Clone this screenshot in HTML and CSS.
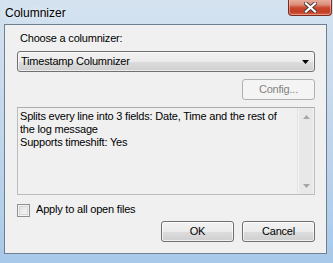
FILE: index.html
```html
<!DOCTYPE html>
<html>
<head>
<meta charset="utf-8">
<link rel="stylesheet" href="styles.css">
</head>
<body>
<div class="window">
  <div class="titlebar">
    <span class="title">Columnizer</span>
    <div class="close">
      <svg width="13" height="11" viewBox="0 0 13 11">
        <path d="M2 1.5 L11 9.5 M11 1.5 L2 9.5" stroke="#4a3a38" stroke-width="4" stroke-linecap="square" fill="none"/>
        <path d="M2 1.5 L11 9.5 M11 1.5 L2 9.5" stroke="#ffffff" stroke-width="2.2" stroke-linecap="square" fill="none"/>
      </svg>
    </div>
  </div>
  <div class="client">
    <div class="label">Choose a columnizer:</div>
    <div class="combo">
      <span>Timestamp Columnizer</span>
      <svg class="arrow" width="7" height="4" viewBox="0 0 7 4"><path d="M0 0 H7 L3.5 4 Z" fill="#000"/></svg>
    </div>
    <div class="config-row"><div class="btn disabled">Config...</div></div>
    <div class="textbox">
      <div class="text">Splits every line into 3 fields: Date, Time and the rest of the log message<br>Supports timeshift: Yes</div>
      <div class="scrollbar">
        <div class="sb-btn"><svg width="7" height="4" viewBox="0 0 7 4"><path d="M3.5 0 L7 4 H0 Z" fill="#a7a7a7"/></svg></div>
        <div class="sb-track"></div>
        <div class="sb-btn"><svg width="7" height="4" viewBox="0 0 7 4"><path d="M0 0 H7 L3.5 4 Z" fill="#a7a7a7"/></svg></div>
      </div>
    </div>
    <div class="check-row">
      <div class="checkbox"></div>
      <span>Apply to all open files</span>
    </div>
    <div class="buttons">
      <div class="btn">OK</div>
      <div class="btn">Cancel</div>
    </div>
  </div>
</div>
</body>
</html>
```
FILE: styles.css
```css
html, body {
  margin: 0;
  padding: 0;
}
body {
  width: 333px;
  height: 263px;
  overflow: hidden;
  font-family: "Liberation Sans", Arial, sans-serif;
}
.window {
  width: 333px;
  height: 263px;
  box-sizing: border-box;
  background: linear-gradient(180deg, #d4e2f0 0%, #c6d9ec 40%, #b3cfea 80%, #a8c8e9 100%);
  display: flex;
  flex-direction: column;
}
.titlebar {
  height: 24px;
  display: flex;
  justify-content: space-between;
  align-items: flex-start;
}
.title {
  font-size: 12px;
  line-height: 14px;
  color: #000;
  padding: 6px 0 0 5px;
  text-shadow: 0 0 6px rgba(255,255,255,0.9);
}
.close {
  width: 44px;
  height: 17px;
  margin: -1px 1px 0 0;
  box-sizing: border-box;
  border: 1px solid #7d2a1e;
  border-top: none;
  border-radius: 0 0 4px 4px;
  background: linear-gradient(180deg, #eab1a3 0%, #dd8f7b 35%, #c9472f 55%, #c33d25 80%, #d5674d 100%);
  box-shadow: inset 0 0 0 1px rgba(255,210,200,0.45);
  display: flex;
  align-items: center;
  justify-content: center;
}
.client {
  margin: 0 6px 0 4px;
  border: 1px solid #6f7f92;
  background: #f0f0f0;
  padding: 7px 11px 11px 12px;
  display: flex;
  flex-direction: column;
  font-size: 11px;
  letter-spacing: -0.2px;
  color: #000;
}
.label {
  line-height: 13px;
  height: 13px;
  padding-left: 3px;
}
.combo {
  margin-top: 6px;
  height: 21px;
  box-sizing: border-box;
  border: 1px solid #707070;
  border-radius: 3px;
  background: linear-gradient(180deg, #f2f2f2 0%, #ebebeb 50%, #dddddd 50%, #cfcfcf 100%);
  box-shadow: inset 0 0 0 1px rgba(255,255,255,0.6);
  display: flex;
  align-items: center;
  justify-content: space-between;
  padding: 0 5px 0 3px;
  line-height: 13px;
}
.config-row {
  margin-top: 7px;
  display: flex;
  justify-content: flex-end;
}
.btn {
  width: 73px;
  height: 21px;
  box-sizing: border-box;
  border: 1px solid #707070;
  border-radius: 3px;
  background: linear-gradient(180deg, #f2f2f2 0%, #ebebeb 50%, #dddddd 50%, #cfcfcf 100%);
  box-shadow: inset 0 0 0 1px rgba(255,255,255,0.7);
  display: flex;
  align-items: center;
  justify-content: center;
  line-height: 13px;
}
.btn.disabled {
  border-color: #adb2b5;
  background: #f4f4f4;
  box-shadow: none;
  color: #838383;
}
.textbox {
  margin-top: 7px;
  height: 88px;
  box-sizing: border-box;
  border: 1px solid #bcbcbc;
  border-top-color: #adadad;
  background: #f0f0f0;
  display: flex;
}
.text {
  flex: 1;
  padding: 2px 14px 0 2px;
  line-height: 13px;
}
.scrollbar {
  width: 17px;
  display: flex;
  flex-direction: column;
  background: #e8e8e8;
  border-left: 1px solid #e2e2e2;
  box-sizing: border-box;
  box-shadow: inset 1px 0 0 #f4f4f4, inset -1px 0 0 #f4f4f4;
}
.sb-btn {
  height: 17px;
  display: flex;
  align-items: center;
  justify-content: center;
}
.sb-track {
  flex: 1;
}
.check-row {
  margin-top: 9px;
  height: 13px;
  display: flex;
  align-items: center;
  line-height: 13px;
}
.checkbox {
  width: 13px;
  height: 13px;
  box-sizing: border-box;
  border: 1px solid #8e8f8f;
  background: linear-gradient(135deg, #dcdcdc 0%, #f0f0f0 60%, #fbfbfb 100%);
  box-shadow: inset 0 0 0 1px #f4f4f4, inset 0 0 0 2px #d6d6d6;
  margin-right: 6px;
}
.check-row span {
  position: relative;
  top: -1px;
}
.buttons {
  margin-top: 4px;
  display: flex;
  justify-content: flex-end;
  gap: 8px;
}
```
